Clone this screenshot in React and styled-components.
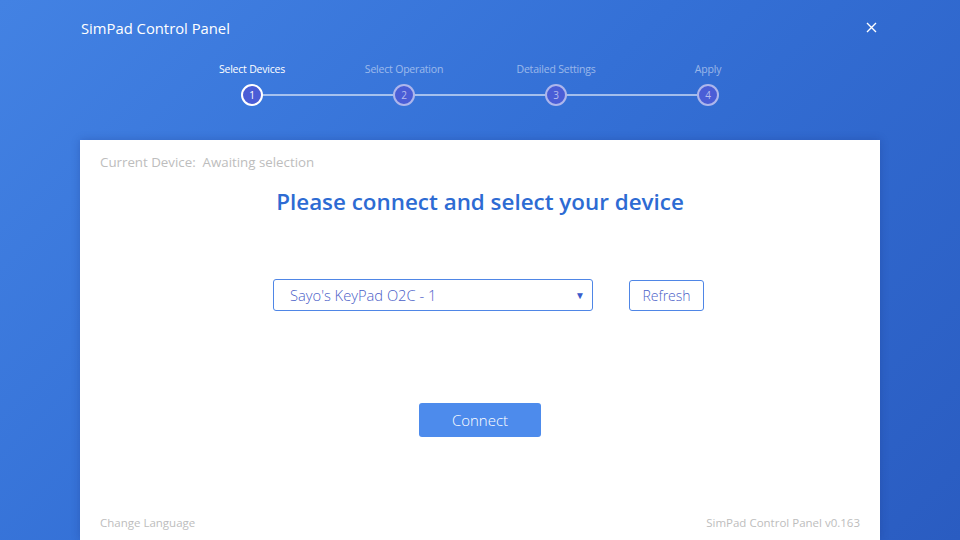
import React from 'react';
import styled, { createGlobalStyle } from 'styled-components';

const GlobalStyle = createGlobalStyle`
    html, body {
        margin: 0;
        padding: 0;
    }
    body {
        font-family: "Open Sans", "Noto Sans", sans-serif;
    }
`;

const Window = styled.div`
    width: 960px;
    height: 540px;
    overflow: hidden;
    display: flex;
    flex-direction: column;
    background: linear-gradient(135deg, #4382e3 0%, #3470d6 45%, #2a5cc1 100%);
`;

const TitleBar = styled.div`
    height: 55px;
    display: flex;
    align-items: center;
    padding: 0 82px 0 81px;
    color: #fff;
`;

const Title = styled.div`
    font-size: 14.8px;
`;

const CloseButton = styled.button`
    margin-left: auto;
    width: 14px;
    height: 14px;
    padding: 0;
    border: none;
    background: none;
    display: flex;
    align-items: center;
    justify-content: center;
`;

const Stepper = styled.ol`
    list-style: none;
    margin: 7px 0 0 176px;
    padding: 0;
    display: grid;
    grid-template-columns: repeat(4, 152px);
`;

const Step = styled.li`
    position: relative;
    display: flex;
    flex-direction: column;
    align-items: center;

    &:not(:last-child)::after {
        content: '';
        position: absolute;
        left: 76px;
        width: 152px;
        top: 32px;
        height: 2px;
        background: rgba(255, 255, 255, 0.55);
    }
`;

const StepLabel = styled.span`
    font-size: 10.5px;
    line-height: 14px;
    letter-spacing: -0.2px;
    color: ${p => (p.$active ? '#fff' : 'rgba(255, 255, 255, 0.5)')};
`;

const StepCircle = styled.span`
    position: relative;
    z-index: 1;
    margin-top: 8px;
    width: 18px;
    height: 18px;
    border-radius: 50%;
    border: 2px solid ${p => (p.$active ? '#fff' : 'rgba(255, 255, 255, 0.55)')};
    background: #4a5dd6;
    color: ${p => (p.$active ? '#fff' : 'rgba(255, 255, 255, 0.6)')};
    font-size: 10px;
    display: flex;
    align-items: center;
    justify-content: center;
`;

const Card = styled.div`
    margin: 34px 80px 0;
    flex: 1;
    background: #fff;
    box-shadow: 0 0 8px rgba(20, 40, 110, 0.25);
    display: flex;
    flex-direction: column;
    padding: 14px 20px 9px;
`;

const CurrentDevice = styled.div`
    font-size: 13.3px;
    line-height: 16px;
    color: #bdbdbd;
    white-space: pre;
`;

const Heading = styled.h1`
    margin: 17px 0 0;
    text-align: center;
    font-size: 22.4px;
    line-height: 30px;
    font-weight: 600;
    color: #2d6bd3;
`;

const DeviceRow = styled.div`
    margin-top: 62px;
    padding-left: 173px;
    display: flex;
    align-items: center;
    gap: 36px;
`;

const Select = styled.div`
    box-sizing: border-box;
    width: 320px;
    height: 32px;
    border: 1px solid #4f86e6;
    border-radius: 3px;
    display: flex;
    align-items: center;
    padding: 0 7px 0 16px;
    color: #4a60c8;
    font-size: 14.7px;
    font-weight: 300;
`;

const Arrow = styled.span`
    margin-left: auto;
    font-size: 10px;
    color: #3a5ccc;
`;

const OutlineButton = styled.button`
    box-sizing: border-box;
    width: 75px;
    height: 31px;
    border: 1px solid #4f86e6;
    border-radius: 3px;
    background: #fff;
    color: #4a60c8;
    font-family: inherit;
    font-size: 14px;
    font-weight: 300;
    padding: 0;
`;

const PrimaryButton = styled.button`
    align-self: center;
    margin-top: 92px;
    width: 122px;
    height: 34px;
    border: none;
    border-radius: 3px;
    background: #4d8bec;
    color: #fff;
    font-family: inherit;
    font-size: 15px;
    font-weight: 300;
    padding: 0;
`;

const Footer = styled.div`
    margin-top: auto;
    display: flex;
    justify-content: space-between;
    font-size: 11.5px;
    line-height: 16px;
    color: #bdbdbd;
`;

const steps = ['Select Devices', 'Select Operation', 'Detailed Settings', 'Apply'];

const App = () => (
    <>
        <GlobalStyle />
        <Window>
            <TitleBar>
                <Title>SimPad Control Panel</Title>
                <CloseButton aria-label="Close">
                    <svg width="11" height="11" viewBox="0 0 11 11">
                        <path d="M1 1L10 10M10 1L1 10" stroke="#fff" strokeWidth="1.4" />
                    </svg>
                </CloseButton>
            </TitleBar>
            <Stepper>
                {steps.map((name, idx) => (
                    <Step key={name}>
                        <StepLabel $active={idx === 0}>{name}</StepLabel>
                        <StepCircle $active={idx === 0}>{idx + 1}</StepCircle>
                    </Step>
                ))}
            </Stepper>
            <Card>
                <CurrentDevice>Current Device:  Awaiting selection</CurrentDevice>
                <Heading>Please connect and select your device</Heading>
                <DeviceRow>
                    <Select>
                        Sayo's KeyPad O2C - 1
                        <Arrow>▼</Arrow>
                    </Select>
                    <OutlineButton>Refresh</OutlineButton>
                </DeviceRow>
                <PrimaryButton>Connect</PrimaryButton>
                <Footer>
                    <span>Change Language</span>
                    <span>SimPad Control Panel v0.163</span>
                </Footer>
            </Card>
        </Window>
    </>
);

export default App;
